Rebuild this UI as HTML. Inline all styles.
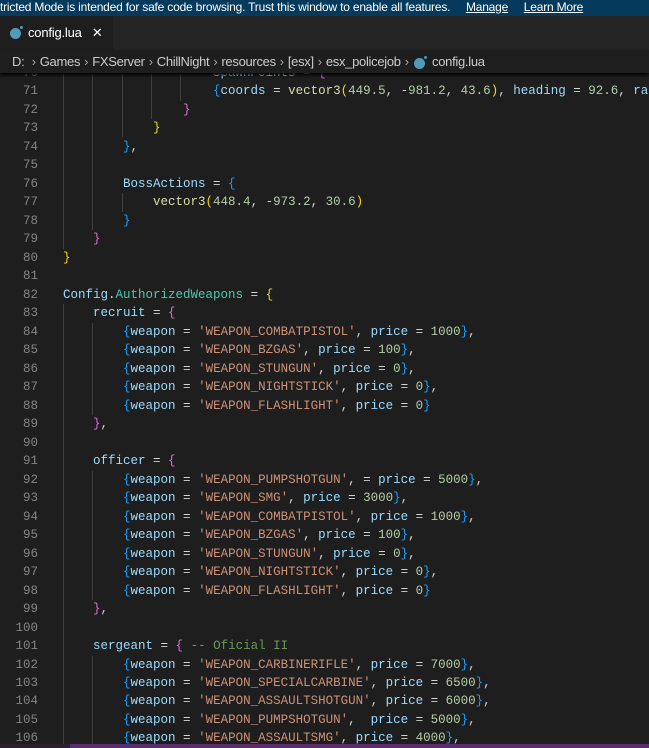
<!DOCTYPE html>
<html><head><meta charset="utf-8"><style>
*{margin:0;padding:0;box-sizing:border-box}
body{width:649px;height:748px;overflow:hidden;background:#1e1e1e;position:relative;font-family:"Liberation Sans",sans-serif}
#banner{position:absolute;left:0;top:0;width:649px;height:16px;background:#063a5c;color:#fff;font-size:12px;line-height:14px;white-space:nowrap;letter-spacing:-0.2px}
#banner u{text-decoration:underline}
#tabs{position:absolute;left:0;top:16px;width:649px;height:34px;background:#252526}
#tab{position:absolute;left:0;top:0;width:113px;height:34px;background:#1e1e1e;color:#fff;font-size:13px;line-height:34px;padding-left:28px;letter-spacing:-0.2px}
.dot{position:absolute;width:11px;height:11px;border-radius:50%;background:#519aba}
.dot:after{content:"";position:absolute;right:-2px;top:-2px;width:3px;height:3px;border-radius:50%;background:#519aba}
#crumb{position:absolute;left:0;top:50px;width:649px;height:23px;background:#1e1e1e;color:#cccccc;font-size:13px;line-height:24px;padding-left:12px;white-space:nowrap;letter-spacing:-0.3px;box-shadow:0 2px 3px #000;z-index:2}
#crumb .sep{color:#aaa;margin:0 4px}
#code{position:absolute;left:0;top:64px;width:649px;font-family:"Liberation Mono",monospace;font-size:12.5px;white-space:pre}
.l{height:18.49px;line-height:18.49px;position:relative}
.ln{position:absolute;right:611px;color:#858585;text-align:right}
.tx{position:absolute;left:63px;color:#d4d4d4}
.g{position:absolute;top:0;width:1px;height:18.49px;background:#404040}
.v{color:#9cdcfe}.s{color:#ce9178}.n{color:#b5cea8}.y{color:#ffd700}.p{color:#da70d6}.b{color:#179fff}.f{color:#dcdcaa}.c{color:#6a9955}.t{color:#4ec9b0}
#bot{position:absolute;left:0;top:744px;width:649px;height:4px;background:#2d1f33}
#bot2{position:absolute;left:70px;top:744px;width:579px;height:4px;background:#5c2a6e}
</style></head><body>
<div id="banner">tricted Mode is intended for safe code browsing. Trust this window to enable all features. &nbsp;&nbsp;&nbsp;&nbsp;<u>Manage</u> &nbsp;&nbsp;&nbsp;&nbsp;<u>Learn More</u></div>
<div id="tabs"><div id="tab"><span class="dot" style="left:10px;top:12px"></span>config.lua &nbsp;&nbsp;✕</div></div>
<div id="crumb">D: <span class="sep">›</span>Games<span class="sep">›</span>FXServer<span class="sep">›</span>ChillNight<span class="sep">›</span>resources<span class="sep">›</span>[esx]<span class="sep">›</span>esx_policejob<span class="sep">›</span><span style="display:inline-block;width:16px;position:relative;top:1px"><span class="dot" style="left:1px;top:-9px"></span></span> config.lua</div>
<div id="code"></div>
<div id="bot"></div><div id="bot2"></div>
<script>
var L=[
[70,'<span class="v">                    SpawnPoints</span> = <span class="p">{</span>',5],
[71,'                    <span class="b">{</span><span class="v">coords</span> = <span class="f">vector3</span><span class="y">(</span><span class="n">449.5</span>, -<span class="n">981.2</span>, <span class="n">43.6</span><span class="y">)</span>, <span class="v">heading</span> = <span class="n">92.6</span>, <span class="v">ra</span>',5],
[72,'                <span class="p">}</span>',4],
[73,'            <span class="y">}</span>',3],
[74,'        <span class="b">}</span>,',2],
[75,'',2],
[76,'        <span class="v">BossActions</span> = <span class="b">{</span>',2],
[77,'            <span class="f">vector3</span><span class="y">(</span><span class="n">448.4</span>, -<span class="n">973.2</span>, <span class="n">30.6</span><span class="y">)</span>',3],
[78,'        <span class="b">}</span>',2],
[79,'    <span class="p">}</span>',1],
[80,'<span class="y">}</span>',0],
[81,'',0],
[82,'<span class="v">Config</span>.<span class="t">AuthorizedWeapons</span> = <span class="y">{</span>',0],
[83,'    <span class="v">recruit</span> = <span class="p">{</span>',1]
];
function w(name,price,sp){return '        <span class="b">{</span><span class="v">weapon</span> = <span class="s">\''+name+'\'</span>,'+(sp||' ')+'<span class="v">price</span> = <span class="n">'+price+'</span><span class="b">}</span>';}
L.push([84,w('WEAPON_COMBATPISTOL',1000)+',',2]);
L.push([85,w('WEAPON_BZGAS',100)+',',2]);
L.push([86,w('WEAPON_STUNGUN',0)+',',2]);
L.push([87,w('WEAPON_NIGHTSTICK',0)+',',2]);
L.push([88,w('WEAPON_FLASHLIGHT',0),2]);
L.push([89,'    <span class="p">}</span>,',1]);
L.push([90,'',1]);
L.push([91,'    <span class="v">officer</span> = <span class="p">{</span>',1]);
L.push([92,'        <span class="b">{</span><span class="v">weapon</span> = <span class="s">\'WEAPON_PUMPSHOTGUN\'</span>, = <span class="v">price</span> = <span class="n">5000</span><span class="b">}</span>,',2]);
L.push([93,w('WEAPON_SMG',3000)+',',2]);
L.push([94,w('WEAPON_COMBATPISTOL',1000)+',',2]);
L.push([95,w('WEAPON_BZGAS',100)+',',2]);
L.push([96,w('WEAPON_STUNGUN',0)+',',2]);
L.push([97,w('WEAPON_NIGHTSTICK',0)+',',2]);
L.push([98,w('WEAPON_FLASHLIGHT',0),2]);
L.push([99,'    <span class="p">}</span>,',1]);
L.push([100,'',1]);
L.push([101,'    <span class="v">sergeant</span> = <span class="p">{</span> <span class="c">-- Oficial II</span>',1]);
L.push([102,w('WEAPON_CARBINERIFLE',7000)+',',2]);
L.push([103,w('WEAPON_SPECIALCARBINE',6500)+',',2]);
L.push([104,w('WEAPON_ASSAULTSHOTGUN',6000)+',',2]);
L.push([105,w('WEAPON_PUMPSHOTGUN',5000,'  ')+',',2]);
L.push([106,w('WEAPON_ASSAULTSMG',4000)+',',2]);
var h='';
L.forEach(function(r){
  var g='';for(var i=0;i<r[2];i++){g+='<div class="g" style="left:'+(63+i*29.3)+'px"></div>';}
  h+='<div class="l"><span class="ln">'+r[0]+'</span>'+g+'<span class="tx">'+r[1]+'</span></div>';
});
document.getElementById('code').innerHTML=h;
</script>
</body></html>
